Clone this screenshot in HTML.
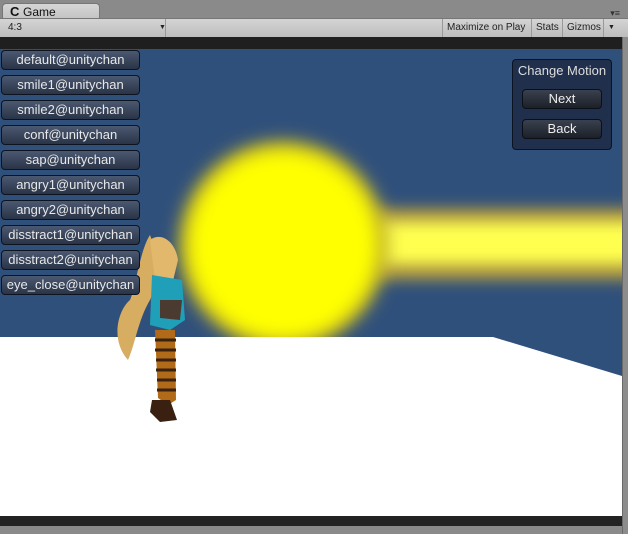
<!DOCTYPE html>
<html><head><style>
body{margin:0;width:628px;height:534px;overflow:hidden;background:#8a8a8a;font-family:"Liberation Sans",sans-serif;position:relative}
.tab{position:absolute;left:2px;top:3px;width:96px;height:16px;background:linear-gradient(#d6d6d6,#c2c2c2);border:1px solid #777;border-bottom:none;border-radius:4px 4px 0 0;font-size:12px;line-height:16px;color:#111}
.tool{position:absolute;left:0;top:18px;width:628px;height:18px;background:linear-gradient(#d4d4d4,#bdbdbd);border-top:1px solid #777;border-bottom:1px solid #666;font-size:10px;color:#222}
.tool span{position:absolute;top:0;line-height:18px;border-left:1px solid #999;padding:0 4px}
.btn{position:absolute;left:1px;width:137px;height:18px;border:1px solid #0d1420;border-radius:4px;background:linear-gradient(#4a5870,#2a3448);color:#e8e8e8;font-size:13px;text-align:center;line-height:18px}
.b2{position:absolute;left:522px;width:78px;height:18px;border:1px solid #0b0f18;border-radius:4px;background:linear-gradient(#3a414e,#1c2028);color:#eee;font-size:13px;text-align:center;line-height:18px}
</style></head><body>
<div class="tab"><span style="position:absolute;left:7px;font-weight:bold;font-size:13px">C</span><span style="position:absolute;left:20px">Game</span></div>
<div style="position:absolute;right:8px;top:8px;font-size:9px;color:#333">▾≡</div>
<div class="tool">
<span style="left:4px;border:none">4:3</span><span style="left:155px;border:none;font-size:7px">▼</span>
<span style="left:165px;padding:0;height:18px"></span>
<span style="left:442px">Maximize on Play</span><span style="left:531px">Stats</span><span style="left:562px">Gizmos</span><span style="left:603px;font-size:7px">▼</span>
</div>
<div style="position:absolute;left:0;top:37px;width:622px;height:12px;background:#1f1f1f"></div>
<svg style="position:absolute;left:0;top:49px" width="622" height="467" viewBox="0 49 622 467">
<defs>
<filter id="b1" x="-30%" y="-30%" width="160%" height="160%"><feGaussianBlur stdDeviation="9"/></filter>
<filter id="b2" x="-10%" y="-80%" width="120%" height="260%"><feGaussianBlur stdDeviation="7"/></filter>
</defs>
<rect x="0" y="49" width="622" height="467" fill="#30507c"/>
<rect x="370" y="208" width="270" height="72" fill="#b09a40" filter="url(#b2)"/>
<rect x="370" y="222" width="270" height="42" fill="#ffff50" filter="url(#b2)"/>
<circle cx="283" cy="245" r="104" fill="#b0a030" filter="url(#b1)"/>
<circle cx="283" cy="245" r="96" fill="#ffff00" filter="url(#b1)"/>
<polygon points="0,337 493,337 622,376 622,516 0,516" fill="#fff"/>
<g>
<path d="M150,235 C140,250 135,290 130,300 C118,310 110,340 128,360 C135,345 138,320 150,300 C160,280 158,255 150,235Z" fill="#d7ad62"/>
<path d="M150,240 C160,232 175,240 178,260 L172,285 L155,280Z" fill="#e2b86c"/>
<path d="M152,275 L182,280 L185,320 L170,330 L150,325Z" fill="#1fa0b8"/>
<path d="M160,300 L182,300 L180,320 L160,318Z" fill="#4a3a30"/>
<path d="M155,330 L175,330 L176,400 L168,405 L158,398Z" fill="#b06a18"/>
<g stroke="#3a2210" stroke-width="3"><line x1="155" y1="340" x2="176" y2="340"/><line x1="155" y1="350" x2="176" y2="350"/><line x1="156" y1="360" x2="176" y2="360"/><line x1="156" y1="370" x2="176" y2="370"/><line x1="157" y1="380" x2="176" y2="380"/><line x1="157" y1="390" x2="176" y2="390"/></g>
<path d="M152,400 L170,400 L177,420 L160,422 L150,412Z" fill="#3a2010"/>
</g>
</svg>
<div style="position:absolute;left:0;top:516px;width:622px;height:10px;background:#232323"></div>
<div style="position:absolute;left:622px;top:37px;width:6px;height:497px;background:#8c8c8c;border-left:1px solid #6a6a6a"></div>

<div class="btn" style="top:50px">default@unitychan</div>
<div class="btn" style="top:75px">smile1@unitychan</div>
<div class="btn" style="top:100px">smile2@unitychan</div>
<div class="btn" style="top:125px">conf@unitychan</div>
<div class="btn" style="top:150px">sap@unitychan</div>
<div class="btn" style="top:175px">angry1@unitychan</div>
<div class="btn" style="top:200px">angry2@unitychan</div>
<div class="btn" style="top:225px">disstract1@unitychan</div>
<div class="btn" style="top:250px">disstract2@unitychan</div>
<div class="btn" style="top:275px">eye_close@unitychan</div>

<div style="position:absolute;left:512px;top:59px;width:98px;height:89px;border:1px solid #0b1220;border-radius:4px;background:#1f2f4c"></div>
<div style="position:absolute;left:512px;top:63px;width:100px;text-align:center;color:#ddd;font-size:13px">Change Motion</div>
<div class="b2" style="top:89px">Next</div>
<div class="b2" style="top:119px">Back</div>
</body></html>
